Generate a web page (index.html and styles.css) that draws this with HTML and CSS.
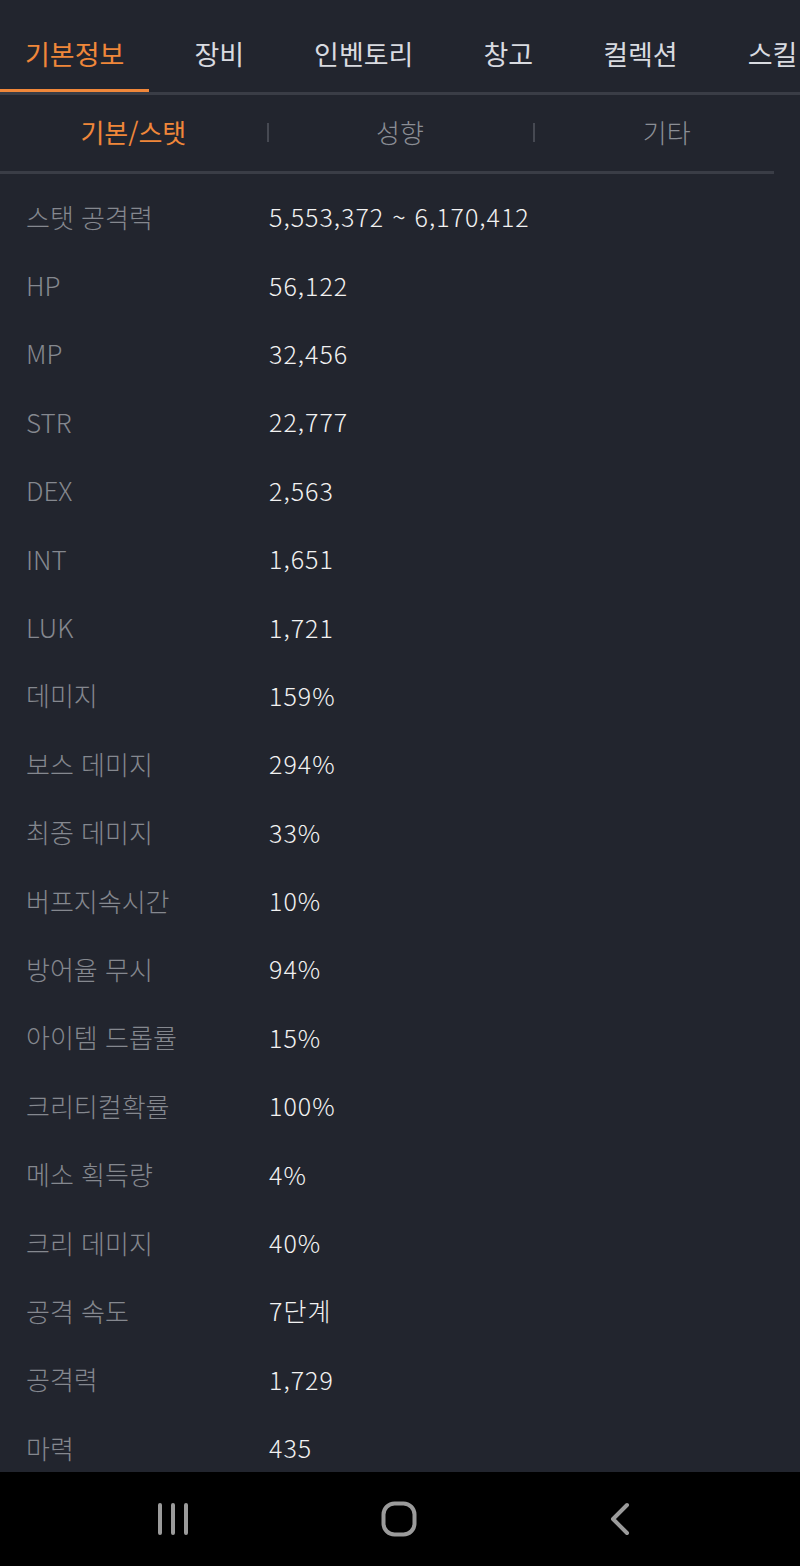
FILE: index.html
```html
<!DOCTYPE html>
<html lang="ko">
<head>
    <meta charset="UTF-8">
    <meta name="viewport" content="width=device-width, initial-scale=1.0">
    <title>기본정보 - 기본/스탯</title>
    <link rel="stylesheet" href="styles.css">
</head>
<body>
    <div class="screen">
        <div class="content">
            <nav class="main-tabs">
                <div class="main-tab active">기본정보</div>
                <div class="main-tab">장비</div>
                <div class="main-tab">인벤토리</div>
                <div class="main-tab">창고</div>
                <div class="main-tab">컬렉션</div>
                <div class="main-tab">스킬</div>
            </nav>

            <nav class="sub-tabs">
                <div class="sub-tab active">기본/스탯</div>
                <div class="sub-tab">성향</div>
                <div class="sub-tab">기타</div>
            </nav>

            <div class="stat-list">
                <div class="stat-row"><span class="stat-label">스탯 공격력</span><span class="stat-value">5,553,372 ~ 6,170,412</span></div>
                <div class="stat-row"><span class="stat-label">HP</span><span class="stat-value">56,122</span></div>
                <div class="stat-row"><span class="stat-label">MP</span><span class="stat-value">32,456</span></div>
                <div class="stat-row"><span class="stat-label">STR</span><span class="stat-value">22,777</span></div>
                <div class="stat-row"><span class="stat-label">DEX</span><span class="stat-value">2,563</span></div>
                <div class="stat-row"><span class="stat-label">INT</span><span class="stat-value">1,651</span></div>
                <div class="stat-row"><span class="stat-label">LUK</span><span class="stat-value">1,721</span></div>
                <div class="stat-row"><span class="stat-label">데미지</span><span class="stat-value">159%</span></div>
                <div class="stat-row"><span class="stat-label">보스 데미지</span><span class="stat-value">294%</span></div>
                <div class="stat-row"><span class="stat-label">최종 데미지</span><span class="stat-value">33%</span></div>
                <div class="stat-row"><span class="stat-label">버프지속시간</span><span class="stat-value">10%</span></div>
                <div class="stat-row"><span class="stat-label">방어율 무시</span><span class="stat-value">94%</span></div>
                <div class="stat-row"><span class="stat-label">아이템 드롭률</span><span class="stat-value">15%</span></div>
                <div class="stat-row"><span class="stat-label">크리티컬확률</span><span class="stat-value">100%</span></div>
                <div class="stat-row"><span class="stat-label">메소 획득량</span><span class="stat-value">4%</span></div>
                <div class="stat-row"><span class="stat-label">크리 데미지</span><span class="stat-value">40%</span></div>
                <div class="stat-row"><span class="stat-label">공격 속도</span><span class="stat-value">7단계</span></div>
                <div class="stat-row"><span class="stat-label">공격력</span><span class="stat-value">1,729</span></div>
                <div class="stat-row"><span class="stat-label">마력</span><span class="stat-value">435</span></div>
            </div>
        </div>

        <!-- system navigation bar -->
        <div class="system-bar">
            <svg class="sys-icon" width="34" height="34" viewBox="0 0 34 34">
                <path d="M4 3 V31 M17 3 V31 M30 3 V31" stroke="#9b9b9b" stroke-width="4" stroke-linecap="round" fill="none"/>
            </svg>
            <svg class="sys-icon" width="36" height="36" viewBox="0 0 36 36">
                <rect x="2.5" y="2.5" width="31" height="31" rx="11" stroke="#9b9b9b" stroke-width="4" fill="none"/>
            </svg>
            <svg class="sys-icon" width="24" height="34" viewBox="0 0 24 34">
                <path d="M19 3 L5 17 L19 31" stroke="#9b9b9b" stroke-width="4" stroke-linecap="round" stroke-linejoin="round" fill="none"/>
            </svg>
        </div>
    </div>
</body>
</html>
```

FILE: styles.css
```css
:root {
    --bg-color: #22252e;
    --line-color: #3a3d46;
    --accent-color: #f0873a;
    --tab-text: #d9dbe0;
    --sub-text: #8b8e95;
    --label-color: #85888f;
    --value-color: #f2f2f2;
}

* {
    margin: 0;
    padding: 0;
    box-sizing: border-box;
}

body {
    font-family: "Noto Sans CJK KR", "Noto Sans", sans-serif;
    background-color: #000;
    color: var(--value-color);
}

.screen {
    width: 800px;
    height: 1566px;
    display: flex;
    flex-direction: column;
}

.content {
    flex: 1;
    overflow: hidden;
    background-color: var(--bg-color);
}

/* top tabs */
.main-tabs {
    display: flex;
    gap: 20px;
    height: 95px;
    border-bottom: 3px solid var(--line-color);
    white-space: nowrap;
    overflow: hidden;
}

.main-tab {
    position: relative;
    display: flex;
    align-items: center;
    flex-shrink: 0;
    padding: 26px 25px 12px;
    font-size: 27px;
    line-height: 1;
    color: var(--tab-text);
}

.main-tab.active {
    color: var(--accent-color);
}

.main-tab.active::after {
    content: "";
    position: absolute;
    left: 0;
    right: 0;
    bottom: -3px;
    height: 6px;
    background-color: var(--accent-color);
}

/* sub tabs */
.sub-tabs {
    position: relative;
    display: grid;
    grid-template-columns: repeat(3, 1fr);
    height: 79px;
    padding-bottom: 7px;
}

.sub-tabs::after {
    content: "";
    position: absolute;
    left: 0;
    right: 26px;
    bottom: 0;
    height: 3px;
    background-color: var(--line-color);
}

.sub-tab {
    position: relative;
    display: flex;
    align-items: center;
    justify-content: center;
    font-size: 26px;
    font-weight: 300;
    color: var(--sub-text);
}

.sub-tab.active {
    color: var(--accent-color);
    font-weight: 400;
}

.sub-tab + .sub-tab::before {
    content: "";
    position: absolute;
    left: 0;
    top: 28px;
    height: 19px;
    width: 2px;
    background-color: #464952;
}

/* stat rows */
.stat-list {
    padding-top: 8px;
}

.stat-row {
    display: grid;
    grid-template-columns: 243px 1fr;
    align-items: center;
    height: 68.4px;
    padding-left: 26px;
    font-weight: 300;
}

.stat-label {
    font-size: 26px;
    color: var(--label-color);
}

.stat-value {
    font-size: 25px;
    letter-spacing: 1px;
    color: var(--value-color);
}

/* android nav bar */
.system-bar {
    height: 94px;
    background-color: #000;
    display: flex;
    align-items: center;
    justify-content: space-between;
    padding: 0 168px 0 156px;
}

.sys-icon {
    display: block;
}
```
